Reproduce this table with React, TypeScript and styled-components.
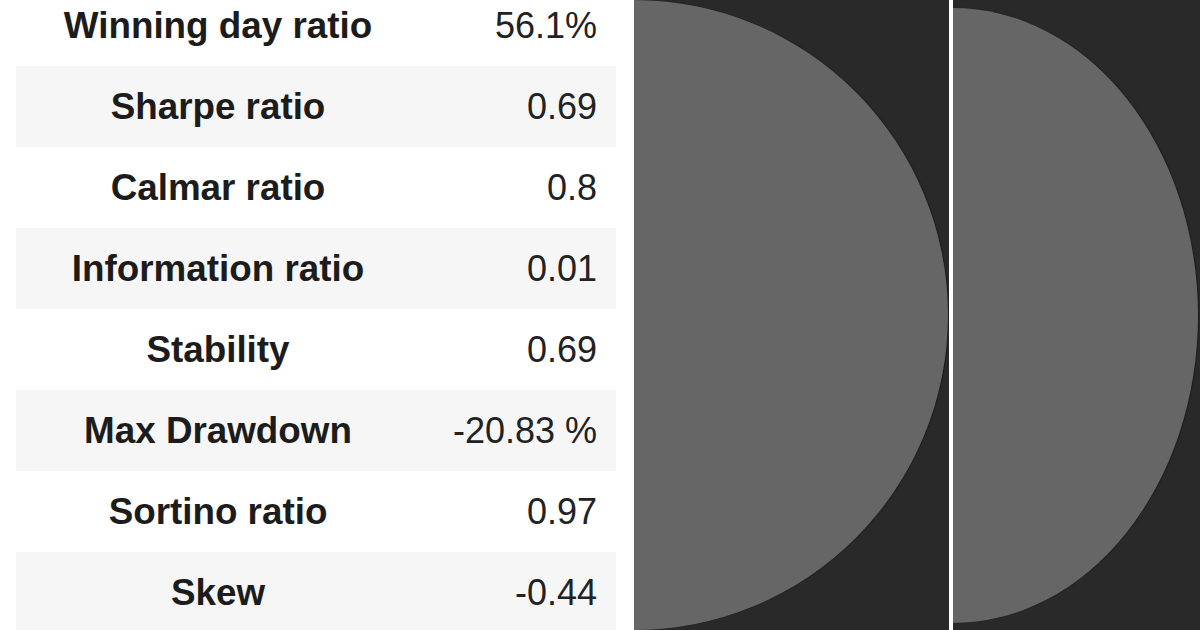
import React from 'react';
import styled, { createGlobalStyle } from 'styled-components';

const GlobalStyle = createGlobalStyle`
  html, body {
    margin: 0;
    padding: 0;
    background: #fff;
    overflow: hidden;
  }
`;

const Page = styled.div`
  display: flex;
  width: 1200px;
  height: 630px;
  overflow: hidden;
  background: #fff;
`;

const StatsTable = styled.div`
  width: 600px;
  margin: -15px 18px 0 16px;
  flex-shrink: 0;
  font-family: 'Liberation Sans', Arial, sans-serif;
  color: #1c1c1c;
`;

const Row = styled.div<{ shaded: boolean }>`
  display: grid;
  grid-template-columns: 404px 1fr;
  align-items: center;
  height: 81px;
  background: ${({ shaded }) => (shaded ? '#f6f6f6' : '#fff')};
`;

const Label = styled.div`
  text-align: center;
  font-size: 36.8px;
  font-weight: bold;
`;

const Value = styled.div`
  text-align: right;
  padding-right: 19px;
  font-size: 36px;
  color: #222;
`;

const Panel = styled.div<{ w?: number }>`
  ${({ w }) => (w ? `width: ${w}px; flex-shrink: 0;` : 'flex: 1;')}
  height: 630px;
  background: #292929;
  display: flex;
  align-items: center;
  overflow: hidden;
`;

const Gap = styled.div`
  width: 4px;
  flex-shrink: 0;
  background: #fff;
`;

const Moon = styled.div<{ w: number; h: number }>`
  width: ${({ w }) => w}px;
  height: ${({ h }) => h}px;
  flex-shrink: 0;
  background: #666;
  border-radius: 0 100% 100% 0 / 0 50% 50% 0;
  box-shadow: 1px 0 1px #1d1d1d;
`;

const stats = [
  ['Winning day ratio', '56.1%'],
  ['Sharpe ratio', '0.69'],
  ['Calmar ratio', '0.8'],
  ['Information ratio', '0.01'],
  ['Stability', '0.69'],
  ['Max Drawdown', '-20.83 %'],
  ['Sortino ratio', '0.97'],
  ['Skew', '-0.44'],
];

const App = () => {
  return (
    <>
      <GlobalStyle />
      <Page>
        <StatsTable>
          {stats.map(([label, value], i) => (
            <Row key={label} shaded={i % 2 === 1}>
              <Label>{label}</Label>
              <Value>{value}</Value>
            </Row>
          ))}
        </StatsTable>
        <Panel w={315}>
          <Moon w={314} h={630} />
        </Panel>
        <Gap />
        <Panel>
          <Moon w={245} h={615} />
        </Panel>
      </Page>
    </>
  );
};

export default App;
